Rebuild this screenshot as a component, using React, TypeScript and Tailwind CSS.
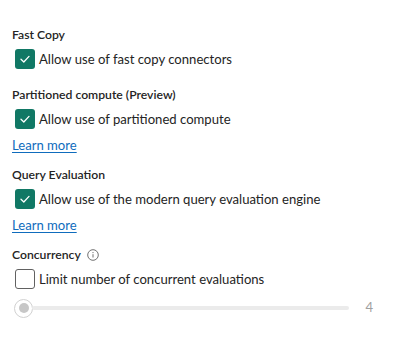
import React from "react";

function Check({ checked, label }: { checked: boolean; label: string }) {
  return (
    <div className="flex items-center gap-[4px] pl-[15px] h-[24px]">
      {checked ? (
        <div className="w-[20px] h-[20px] rounded-[3px] bg-[#117865] flex items-center justify-center shrink-0">
          <svg width="12" height="12" viewBox="0 0 12 12" fill="none">
            <path d="M2 6.3 L4.8 9 L10 3.4" stroke="white" strokeWidth="1.3" strokeLinecap="round" strokeLinejoin="round" />
          </svg>
        </div>
      ) : (
        <div className="w-[20px] h-[20px] rounded-[3px] border border-[#616161] bg-white shrink-0" />
      )}
      <span className="text-[13.1px] text-[#242424] leading-[20px]">{label}</span>
    </div>
  );
}

function Title({ children }: { children: React.ReactNode }) {
  return <div className="text-[12.2px] font-semibold text-[#242424] leading-[16px] h-[16px]">{children}</div>;
}

function LearnMore() {
  return (
    <div className="pl-[12px] text-[13.1px] leading-[20px] h-[20px] text-[#0f6cbd] underline underline-offset-2">Learn more</div>
  );
}

export default function App() {
  return (
    <div className="w-[399px] h-[363px] bg-white pt-[27px]" style={{ fontFamily: '"Segoe UI", Lato, "Noto Sans", sans-serif' }}>
      <div className="pl-[12px]"><Title>Fast Copy</Title></div>
      <div className="mt-[4px]"><Check checked label="Allow use of fast copy connectors" /></div>
      <div className="mt-[16px] pl-[12px]"><Title>Partitioned compute (Preview)</Title></div>
      <div className="mt-[4px]"><Check checked label="Allow use of partitioned compute" /></div>
      <div className="mt-[4px]"><LearnMore /></div>
      <div className="mt-[12px] pl-[12px]"><Title>Query Evaluation</Title></div>
      <div className="mt-[4px]"><Check checked label="Allow use of the modern query evaluation engine" /></div>
      <div className="mt-[4px]"><LearnMore /></div>
      <div className="mt-[12px] pl-[12px] flex items-center gap-[6px] h-[16px]">
        <Title>Concurrency</Title>
        <svg width="12" height="12" viewBox="0 0 12 12" fill="none">
          <circle cx="6" cy="6" r="5.3" stroke="#616161" strokeWidth="0.9" />
          <line x1="6" y1="5.2" x2="6" y2="8.5" stroke="#616161" strokeWidth="0.9" />
          <circle cx="6" cy="3.6" r="0.6" fill="#616161" />
        </svg>
      </div>
      <div className="mt-[4px]"><Check checked={false} label="Limit number of concurrent evaluations" /></div>
      <div className="mt-[7px] flex items-center pl-[14px] pr-[26px] h-[20px]">
        <div className="w-[19px] h-[19px] rounded-full border border-[#d1d1d1] bg-white flex items-center justify-center shrink-0">
          <div className="w-[10px] h-[10px] rounded-full bg-[#c7c7c7]" />
        </div>
        <div className="flex-1 h-[4px] bg-[#ebebeb] rounded-full ml-[-1px]" />
        <span className="ml-[16px] text-[13.1px] text-[#a0a0a0]">4</span>
      </div>
    </div>
  );
}
